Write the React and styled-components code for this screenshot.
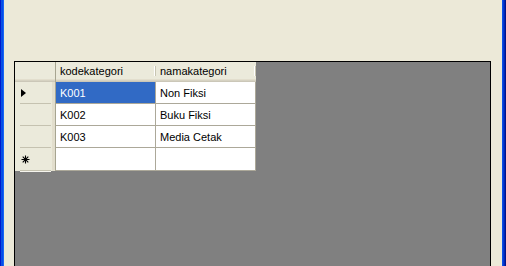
import React from "react";
import styled, { createGlobalStyle } from "styled-components";

const GlobalStyle = createGlobalStyle`
  html, body {
    margin: 0;
    padding: 0;
    overflow: hidden;
  }
  body {
    font-family: "Liberation Sans", Arial, sans-serif;
    font-size: 11px;
  }
`;

const rows = [
  { kode: "K001", nama: "Non Fiksi" },
  { kode: "K002", nama: "Buku Fiksi" },
  { kode: "K003", nama: "Media Cetak" },
];

const NewRowIcon = () => (
  <StarIcon width="9" height="9" viewBox="0 0 9 9">
    <path
      d="M4.5 0.5V8.5M0.5 4.5H8.5M1.7 1.7L7.3 7.3M7.3 1.7L1.7 7.3"
      stroke="#000"
      strokeWidth="1.1"
      fill="none"
    />
  </StarIcon>
);

const App = () => {
  return (
    <>
      <GlobalStyle />
      <Window>
        <BorderLeft />
        <Client>
          <GridPanel>
            <Grid>
              <CornerCell />
              <HeaderCell>kodekategori</HeaderCell>
              <HeaderCell>namakategori</HeaderCell>

              {rows.map((row, i) => (
                <React.Fragment key={row.kode}>
                  <RowHeader>{i === 0 && <Pointer />}</RowHeader>
                  <Cell selected={i === 0}>{row.kode}</Cell>
                  <Cell>{row.nama}</Cell>
                </React.Fragment>
              ))}

              <RowHeader>
                <NewRowIcon />
              </RowHeader>
              <Cell />
              <Cell />
            </Grid>
          </GridPanel>
        </Client>
        <BorderRight />
      </Window>
    </>
  );
};

const Window = styled.div`
  display: flex;
  width: 506px;
  height: 266px;
  background-color: #ece9d8;
  overflow: hidden;
`;

const BorderLeft = styled.div`
  width: 4px;
  flex-shrink: 0;
  background: linear-gradient(to right, #0019cf 0 1px, #0855dd 1px 2px, #0846f0 2px 3px, #166aee 3px 4px);
`;

const BorderRight = styled.div`
  width: 4px;
  flex-shrink: 0;
  background: linear-gradient(to right, #0a4ee6 0 1px, #0838d0 1px 2px, #0027b8 2px 3px, #00138c 3px 4px);
`;

const Client = styled.div`
  flex: 1;
  padding: 61px 11px 0 10px;
`;

const GridPanel = styled.div`
  height: 100%;
  box-sizing: border-box;
  border: 1px solid #000000;
  border-bottom: none;
  background-color: #808080;
`;

const Grid = styled.div`
  display: grid;
  grid-template-columns: 41px 100px 100px;
  grid-template-rows: 20px 22px 22px 22px 23px;
  width: max-content;
`;

const HeaderBase = styled.div`
  position: relative;
  box-sizing: border-box;
  background-color: #ebeadb;
  box-shadow: inset 0 -1px 0 #cbc7b8, inset 0 -2px 0 #d6d2c2, inset 0 -3px 0 #e2decd;
`;

const CornerCell = styled(HeaderBase)`
  border-right: 1px solid #a7a591;
`;

const HeaderCell = styled(HeaderBase)`
  display: flex;
  align-items: center;
  padding: 0 0 3px 4px;
  color: #000000;

  &::after {
    content: "";
    position: absolute;
    right: 0;
    top: 4px;
    height: 10px;
    width: 1px;
    background-color: #c7c5b2;
    box-shadow: -1px 0 0 #ffffff;
  }
`;

const RowHeader = styled.div`
  position: relative;
  display: flex;
  align-items: center;
  box-sizing: border-box;
  background-color: #ebeadb;
  border-right: 1px solid #a7a591;
  box-shadow: inset -3px 0 0 #e2decd;

  &::after {
    content: "";
    position: absolute;
    left: 5px;
    right: 4px;
    bottom: 0;
    height: 1px;
    background-color: #c5c2b0;
    box-shadow: 0 1px 0 #f6f5ee;
  }
`;

const Pointer = styled.span`
  margin-left: 6px;
  width: 0;
  height: 0;
  border-top: 4.5px solid transparent;
  border-bottom: 4.5px solid transparent;
  border-left: 5px solid #000000;
`;

const StarIcon = styled.svg`
  margin-left: 6px;
  display: block;
`;

const Cell = styled.div`
  display: flex;
  align-items: center;
  box-sizing: border-box;
  padding-left: 4px;
  border-right: 1px solid #aca899;
  border-bottom: 1px solid #aca899;
  background-color: ${(p) => (p.selected ? "#316ac5" : "#ffffff")};
  color: ${(p) => (p.selected ? "#ffffff" : "#000000")};
  white-space: nowrap;
`;

export default App;
